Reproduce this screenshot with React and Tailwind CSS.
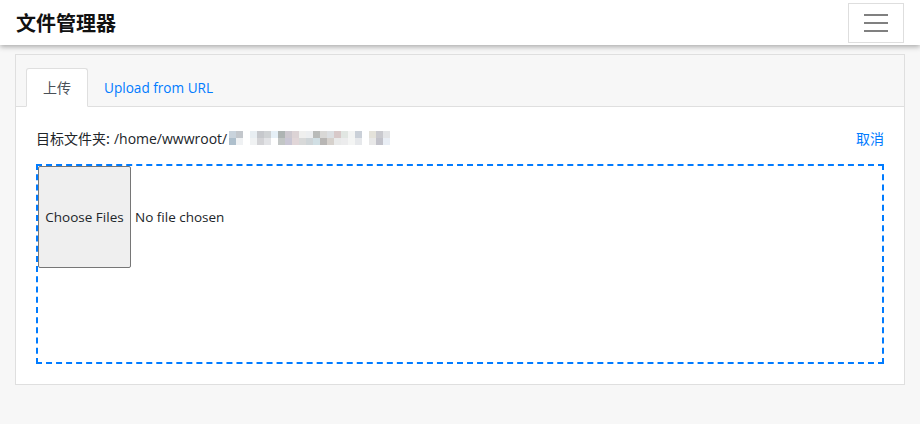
const BLUR = [
  ['#c9d3dc', '#c3c7cc', '#ffffff', '#e8eef2', '#c6c8cc', '#cfd2d4', '#e6f0f7', '#aeb4b3', '#cdc8cf', '#dcd3d5', '#efefee', '#eceef0', '#b9bbb9', '#d9d8d6', '#dcdfe2', '#d8c9c9', '#e1e6e2', '#f3f4f3', '#cad0d8', '#ffffff', '#e4e2da', '#c9c9ce', '#e3e4e6'],
  ['#aebfcc', '#eff1f3', '#ffffff', '#f0f2f3', '#d3d3d6', '#e2e3e6', '#ffffff', '#c2c6c5', '#c9c6d4', '#e1d6d8', '#d8d9d9', '#cfd5d8', '#d1dfe4', '#b8b6b4', '#d6d1cc', '#e9eaea', '#ececed', '#f4f5f4', '#e6e8eb', '#ffffff', '#e8e8e8', '#c2c2ca', '#e9eef5'],
]

export default function App() {
  return (
    <div className="min-h-[424px] bg-[#f7f7f7] font-['Open_Sans','Noto_Sans_CJK_SC',sans-serif] text-[#212529]">
      {/* Navbar */}
      <header className="h-[45px] bg-white shadow-[0_2px_5px_rgba(0,0,0,0.3)] flex items-center justify-between pl-4 pr-4 relative z-10">
        <h1 className="text-[20px] font-bold text-[#111] font-['Noto_Sans_CJK_SC',sans-serif] leading-none">文件管理器</h1>
        <button className="w-[56px] h-[40px] border border-[#dedede] flex flex-col items-center justify-center gap-[6px]">
          <span className="block w-6 h-[2px] bg-[#808080]" />
          <span className="block w-6 h-[2px] bg-[#808080]" />
          <span className="block w-6 h-[2px] bg-[#808080]" />
        </button>
      </header>

      <main className="px-[15px] pt-[9px]">
        <div className="border border-[#dfdfdf] bg-white">
          {/* Tabs */}
          <div className="bg-[#f7f7f7] border-b border-[#dfdfdf] pt-3 px-[10px] flex items-end text-[14px]">
            <div className="w-[62px] h-[39px] -mb-px bg-white border border-[#dfdfdf] border-b-white rounded-t-[3px] flex items-center justify-center text-[#495057] font-['Noto_Sans_CJK_SC',sans-serif]">
              上传
            </div>
            <div className="h-[39px] px-4 pt-1 flex items-center text-[#007bff] text-[13.6px]">Upload from URL</div>
          </div>

          {/* Body */}
          <div className="px-5 pt-5 pb-5">
            <div className="flex items-center justify-between h-[22px] text-[14px]">
              <div className="flex items-center">
                <span className="font-['Noto_Sans_CJK_SC',sans-serif]">目标文件夹:</span>
                <span className="ml-1">/home/wwwroot/</span>
                <span className="ml-[2px] flex flex-col">
                  {BLUR.map((row, i) => (
                    <span key={i} className="flex">
                      {row.map((c, j) => (
                        <span key={j} className="block w-[7px] h-[7px]" style={{ background: c }} />
                      ))}
                    </span>
                  ))}
                </span>
              </div>
              <a className="text-[#007bff] font-['Noto_Sans_CJK_SC',sans-serif]">取消</a>
            </div>

            <div className="mt-[15px] h-[200px] border-2 border-dashed border-[#007bff] flex items-start">
              <div className="flex items-center text-[13.5px]">
                <div className="w-[93px] h-[102px] bg-[#efefef] border border-[#767676] rounded-[2px] flex items-center justify-center">
                  Choose Files
                </div>
                <span className="ml-1">No file chosen</span>
              </div>
            </div>
          </div>
        </div>
      </main>
    </div>
  )
}
